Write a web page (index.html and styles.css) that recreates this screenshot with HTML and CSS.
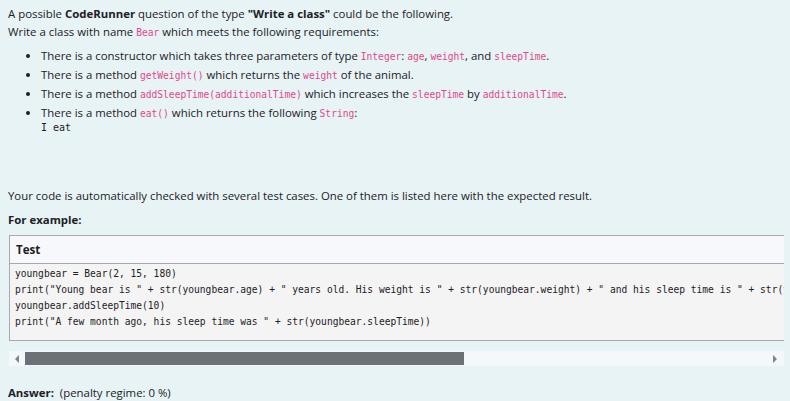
FILE: index.html
```html
<!DOCTYPE html>
<html>
<head>
<meta charset="utf-8">
<link rel="stylesheet" href="styles.css">
</head>
<body>
<div class="page">
  <p class="line">A possible <b>CodeRunner</b> question of the type <b>"Write a class"</b> could be the following.</p>
  <p class="line">Write a class with name <code>Bear</code> which meets the following requirements:</p>
  <ul class="reqs">
    <li>There is a constructor which takes three parameters of type <code>Integer</code>: <code>age</code>, <code>weight</code>, and <code>sleepTime</code>.</li>
    <li>There is a method <code>getWeight()</code> which returns the <code>weight</code> of the animal.</li>
    <li>There is a method <code>addSleepTime(additionalTime)</code> which increases the <code>sleepTime</code> by <code>additionalTime</code>.</li>
    <li>There is a method <code>eat()</code> which returns the following <code>String</code>:<pre class="out">I eat</pre></li>
  </ul>
  <p class="intro">Your code is automatically checked with several test cases. One of them is listed here with the expected result.</p>
  <p class="example">For example:</p>
  <div class="scroller">
    <table class="tests">
      <thead><tr><th>Test</th></tr></thead>
      <tbody><tr><td><pre class="code">youngbear = Bear(2, 15, 180)
print("Young bear is " + str(youngbear.age) + " years old. His weight is " + str(youngbear.weight) + " and his sleep time is " + str(youngbear.sleepTime))
youngbear.addSleepTime(10)
print("A few month ago, his sleep time was " + str(youngbear.sleepTime))</pre></td></tr></tbody>
    </table>
  </div>
  <div class="hscroll">
    <span class="arrow left"></span>
    <div class="track"><div class="thumb"></div></div>
    <span class="arrow right"></span>
  </div>
  <p class="answer"><b>Answer:</b>&nbsp; (penalty regime: 0 %)</p>
</div>
</body>
</html>
```
FILE: styles.css
```css
html, body {
  margin: 0;
  padding: 0;
  background: #e7f3f5;
}
body {
  font-family: "Open Sans", "Noto Sans", sans-serif;
  font-size: 11.4px;
  color: #1d2125;
}
.page {
  padding: 5px 0 0 8px;
  width: 782px;
  overflow: hidden;
}
p { margin: 0; }
.line { line-height: 18px; }
b { font-weight: 700; }
code {
  font-family: "DejaVu Sans Mono", monospace;
  font-size: 9.6px;
  line-height: 1;
  color: #e0488f;
}
.reqs {
  margin: 5px 0 0 0;
  padding-left: 33px;
  line-height: 19px;
}
pre.out {
  margin: -2px 0 0 0;
  font-family: "DejaVu Sans Mono", monospace;
  font-size: 10px;
  line-height: 15px;
  color: #1d2125;
}
.intro {
  margin-top: 52px;
  line-height: 18px;
}
.example {
  margin-top: 6px;
  font-weight: 700;
  line-height: 18px;
}
.scroller {
  margin-top: 6px;
  margin-left: 1px;
  width: 775px;
  overflow: hidden;
}
.tests {
  border-collapse: collapse;
  border-top: 1px solid #a8abad;
  border-left: 1px solid #a8abad;
  border-bottom: 1px solid #a8abad;
}
.tests th {
  text-align: left;
  background: #f7f8fc;
  height: 27px;
  padding: 0 6px;
  font-weight: 700;
  font-size: 11.6px;
  border-bottom: 1px solid #a8abad;
}
.tests td {
  background: #f4f4f4;
  padding: 2px 6px 10px 5px;
}
pre.code {
  margin: 0;
  font-family: "DejaVu Sans Mono", monospace;
  font-size: 9.6px;
  line-height: 16px;
  color: #1d2125;
  white-space: pre;
}
.hscroll {
  margin-top: 10px;
  margin-left: 1px;
  width: 775px;
  height: 15px;
  background: #f5f8fb;
  display: flex;
  align-items: center;
}
.arrow {
  width: 0;
  height: 0;
  border-top: 4px solid transparent;
  border-bottom: 4px solid transparent;
}
.arrow.left {
  margin: 0 6px 0 6px;
  border-right: 4px solid #7d8387;
}
.arrow.right {
  margin: 0 7px 0 6px;
  border-left: 4px solid #7d8387;
}
.track {
  flex: 1;
  height: 15px;
}
.thumb {
  width: 439px;
  height: 13px;
  margin-top: 1px;
  background: #6b7176;
}
.answer {
  margin-top: 18px;
  line-height: 18px;
}
```
